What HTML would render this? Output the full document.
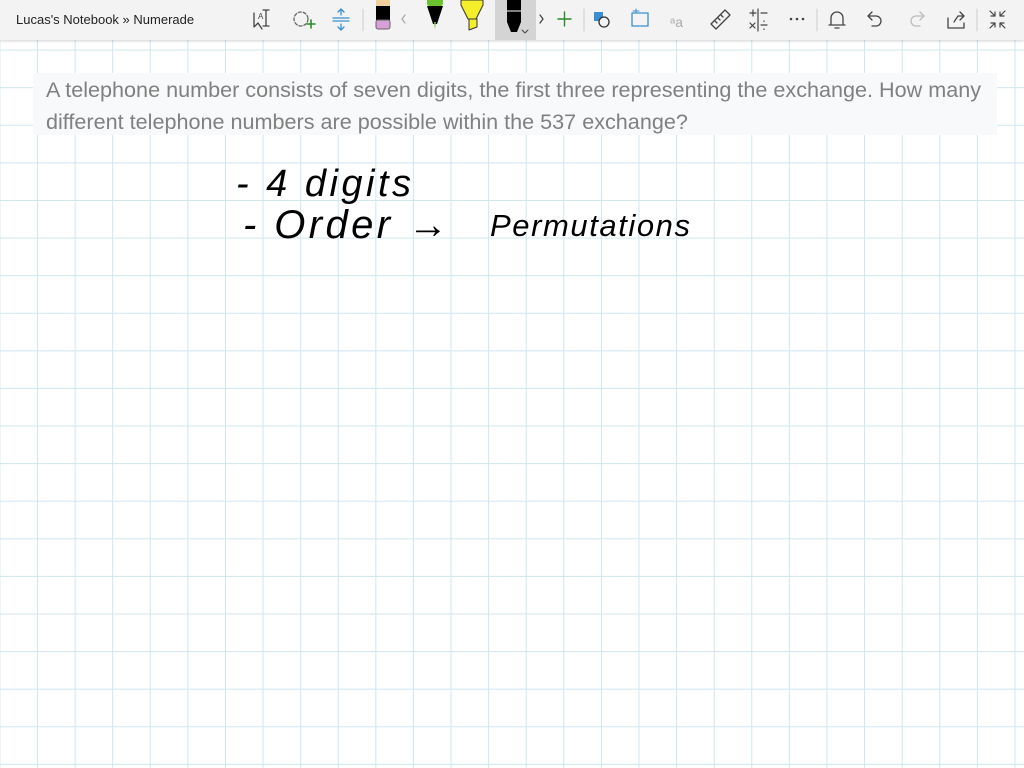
<!DOCTYPE html>
<html><head><meta charset="utf-8"><style>
html,body{margin:0;padding:0;width:1024px;height:768px;overflow:hidden;font-family:"Liberation Sans",sans-serif;}
body{background-color:#fff;background-image:linear-gradient(to right,#cfe6f0 1px,transparent 1px),linear-gradient(to bottom,#cfe6f0 1px,transparent 1px);background-size:37.6px 37.6px;background-position:37px 12px;}
.tb{position:absolute;left:0;top:0;width:1024px;height:40px;background:#f3f3f3;box-shadow:0 1px 3px rgba(0,0,0,.18);}
.title{position:absolute;left:16px;top:12px;font-size:13px;color:#222;}
.q{position:absolute;left:33px;top:73px;width:964px;height:62px;background:#f8f9fa;}
.q p{margin:0;position:absolute;left:13px;top:1px;font-size:21.6px;line-height:32px;color:#808080;white-space:nowrap;}
svg{position:absolute;left:0;top:0;}
</style></head><body>
<div class="tb"><div class="title">Lucas's Notebook » Numerade</div></div>
<svg width="1024" height="40" viewBox="0 0 1024 40" fill="none" stroke-linecap="round" stroke-linejoin="round">
<g stroke="#444" stroke-width="1.3">
<path d="M254 13l0 14 4-4 4 6"/><path d="M263 10h6M266 10v16M263 26h6"/><text x="258" y="19" font-size="8" fill="#444" stroke="none">A</text>
</g>
<circle cx="301" cy="19" r="7" stroke="#666" stroke-dasharray="3 2" stroke-width="1.3"/>
<path d="M307 24h8M311 20v8" stroke="#2a8a2a" stroke-width="1.6"/>
<path d="M333 18h16M333 21h16M341 9v6M338 12l3-3 3 3M341 24v6M338 27l3 3 3-3" stroke="#3a8fd0" stroke-width="1.3"/>
<path d="M363 9v22" stroke="#ccc"/>
<rect x="376" y="0" width="14" height="6" fill="#f0d09a"/><rect x="376" y="6" width="14" height="14" fill="#000"/><rect x="376" y="20" width="14" height="9" rx="2" fill="#d7a0d8" stroke="#666"/>
<path d="M405 15l-3 4 3 4" stroke="#aaa" stroke-width="1.3"/>
<path d="M427 0h16v4l-3 4h-10l-3-4z" fill="#6ac22c"/><path d="M427 6l16 0-6 18h-4z" fill="#000"/><path d="M434 22l1 7 1-7z" fill="#6ac22c"/>
<path d="M461 0h22v5l-7 14h-8l-7-14z" fill="#f4ef2a" stroke="#333"/><path d="M469 19h8v8l-8 3z" fill="#f4ef2a" stroke="#333"/>
<rect x="495" y="0" width="41" height="40" fill="#d4d4d4"/>
<path d="M507 0h14v22l-4 10h-6l-4-10z" fill="#000"/><path d="M507 11h14" stroke="#fff"/><path d="M522 30l3 3 3-3" stroke="#444"/>
<path d="M540 15l3 4-3 4" stroke="#444" stroke-width="1.3"/>
<path d="M558 19h13M564.5 12v14" stroke="#2a8a2a" stroke-width="1.4"/>
<path d="M584 9v22" stroke="#ccc"/>
<rect x="594" y="12" width="9" height="9" fill="#3a8fd0"/><circle cx="604" cy="22" r="5" stroke="#333" stroke-width="1.3" fill="#f3f3f3"/>
<rect x="632" y="13" width="16" height="13" stroke="#3a8fd0" stroke-width="1.3"/><path d="M636 9v4M633 11h6" stroke="#3a8fd0"/>
<text x="670" y="27" font-size="14" fill="#aaa">ᵃa</text>
<path d="M711 24l14-14 5 5-14 14z M715 21l2 2M718 18l2 2M721 15l2 2" stroke="#444" stroke-width="1.3"/>
<path d="M750 13h6M753 10v6M761 13h6M750 23l5 5M755 23l-5 5M761 25h6M764 21v.5M764 29v.5M758 9v22" stroke="#444" stroke-width="1.2"/>
<g fill="#444"><circle cx="791" cy="19" r="1.3"/><circle cx="797" cy="19" r="1.3"/><circle cx="803" cy="19" r="1.3"/></g>
<path d="M817 9v22" stroke="#ccc"/>
<path d="M831 25v-7a6 6 0 0 1 12 0v7h2h-16zM835 28h4" stroke="#444" stroke-width="1.3"/>
<path d="M872 12l-4 4 4 4M868 16h8a5 5 0 0 1 0 10h-4" stroke="#444" stroke-width="1.3"/>
<path d="M920 12l4 4-4 4M924 16h-8a5 5 0 0 0 0 10h4" stroke="#bbb" stroke-width="1.3"/>
<path d="M948 18v10h16v-5M954 22l4-6h6M960 12l4 4-4 4" stroke="#444" stroke-width="1.3"/>
<path d="M977 9v22" stroke="#ccc"/>
<path d="M990 11l5 5M995 12v4h-4M1005 11l-5 5M1000 12v4h4M990 28l5-5M995 27v-4h-4M1005 28l-5-5M1000 27v-4h4" stroke="#444" stroke-width="1.2"/>
</svg>
<div class="q"><p>A telephone number consists of seven digits, the first three representing the exchange. How many<br>different telephone numbers are possible within the 537 exchange?</p></div>
<svg width="1024" height="768" style="top:0">
<g font-family="'Liberation Sans Narrow','Liberation Sans',sans-serif" fill="#000" font-style="italic">
<text x="236" y="196" font-size="38" textLength="175" lengthAdjust="spacing">- 4 digits</text>
<text x="243" y="238" font-size="40" textLength="205" lengthAdjust="spacing">- Order →</text>
<text x="490" y="236" font-size="31" textLength="200" lengthAdjust="spacing">Permutations</text>
</g>
</svg>
</body></html>
